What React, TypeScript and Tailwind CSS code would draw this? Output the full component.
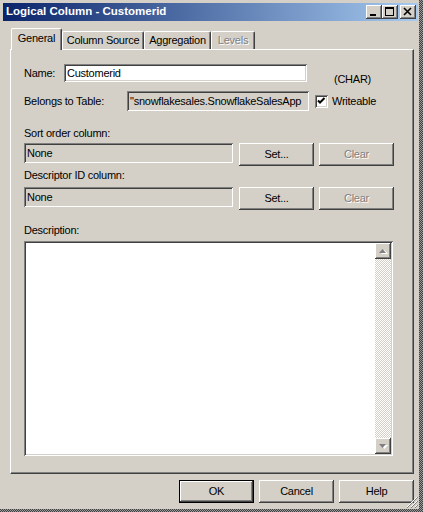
import type { ReactNode } from 'react';

const raised = 'shadow-[inset_-1px_-1px_#404040,inset_1px_1px_#ffffff,inset_-2px_-2px_#808080,inset_2px_2px_#d4d0c8]';
const sunken = 'shadow-[inset_1px_1px_#808080,inset_-1px_-1px_#ffffff,inset_2px_2px_#404040,inset_-2px_-2px_#d4d0c8]';
const etched = 'text-[#808080] [text-shadow:1px_1px_0_#ffffff]';

function Button({ label, disabled, isDefault }: { label: string; disabled?: boolean; isDefault?: boolean }) {
  return (
    <div
      className={`flex h-[23px] w-[75px] shrink-0 items-center justify-center bg-[#d4d0c8] ${
        isDefault
          ? 'shadow-[inset_0_0_0_1px_#000000,inset_-2px_-2px_#404040,inset_2px_2px_#ffffff,inset_-3px_-3px_#808080]'
          : raised
      } ${disabled ? etched : 'text-black'}`}
    >
      {label}
    </div>
  );
}

function Field({ value, width, white }: { value: string; width: string; white?: boolean }) {
  return (
    <div className={`flex h-[20px] shrink-0 items-center overflow-hidden whitespace-nowrap pl-[3px] ${width} ${white ? 'bg-white' : 'bg-[#d4d0c8]'} ${sunken}`}>
      {value}
    </div>
  );
}

function Tab({ children, selected, disabled, width }: { children: ReactNode; selected?: boolean; disabled?: boolean; width: string }) {
  return (
    <div
      className={`flex shrink-0 items-center justify-center whitespace-nowrap rounded-t-[2px] border-t border-l border-r border-t-white border-l-white border-r-[#404040] bg-[#d4d0c8] shadow-[inset_-1px_0_#808080] ${width} ${
        selected ? 'relative z-10 -mb-px h-[22px] pb-[2px]' : 'h-[18px]'
      } ${disabled ? etched : ''}`}
    >
      {children}
    </div>
  );
}

function TitleButton({ children, className = '' }: { children: ReactNode; className?: string }) {
  return <div className={`h-[14px] w-[16px] bg-[#d4d0c8] ${raised} ${className}`}>{children}</div>;
}

function ScrollButton({ up }: { up?: boolean }) {
  return (
    <div className={`h-[16px] w-[16px] shrink-0 bg-[#d4d0c8] ${raised}`}>
      <svg width="16" height="16" viewBox="0 0 16 16">
        {up ? (
          <>
            <path d="M5 10h7l-3.5-4z" fill="#ffffff" transform="translate(1 1)" />
            <path d="M4 10h7l-3.5-4z" fill="#808080" />
          </>
        ) : (
          <>
            <path d="M5 6h7l-3.5 4z" fill="#ffffff" transform="translate(1 1)" />
            <path d="M4 6h7l-3.5 4z" fill="#808080" />
          </>
        )}
      </svg>
    </div>
  );
}

export default function App() {
  return (
    <div className="h-[512px] w-[423px] overflow-hidden bg-[repeating-conic-gradient(#404040_0%_25%,#9a9a9a_0%_50%)] bg-[length:2px_2px] font-['Liberation_Sans',sans-serif] text-[11px] leading-none tracking-[-0.25px] text-black">
      <div className="relative flex h-[509px] w-[419px] flex-col bg-[#d4d0c8] pt-[3px] pl-[3px] pr-[1px]">
        {/* title bar */}
        <div className="flex h-[18px] shrink-0 items-center bg-[linear-gradient(to_right,#0a246a,#a6caf0)] pl-[3px] pr-[2px]">
          <span className="flex-1 text-[11.5px] font-bold tracking-normal text-white">Logical Column - Customerid</span>
          <TitleButton>
            <svg width="16" height="14" viewBox="0 0 16 14">
              <rect x="4" y="9" width="6" height="2" fill="#000" />
            </svg>
          </TitleButton>
          <TitleButton>
            <svg width="16" height="14" viewBox="0 0 16 14">
              <path d="M3 2h9v9H3z M4 4v6h7V4z" fill="#000" fillRule="evenodd" />
            </svg>
          </TitleButton>
          <TitleButton className="ml-[2px]">
            <svg width="16" height="14" viewBox="0 0 16 14">
              <path d="M4 3l7 7M11 3l-7 7" stroke="#000" strokeWidth="1.6" />
            </svg>
          </TitleButton>
        </div>

        {/* tabs */}
        <div className="ml-[8px] mt-[7px] flex h-[21px] items-end">
          <Tab selected width="w-[51px]">General</Tab>
          <Tab width="w-[82px]">Column Source</Tab>
          <Tab width="w-[67px]">Aggregation</Tab>
          <Tab disabled width="w-[44px]">Levels</Tab>
        </div>

        {/* tab panel */}
        <div className="ml-[7px] flex h-[425px] w-[404px] flex-col border border-t-white border-l-white border-r-[#404040] border-b-[#404040] pl-[13px] pt-[14px] shadow-[inset_-1px_-1px_#808080]">
          <div className="flex h-[18px] items-center">
            <span className="w-[40px] shrink-0">Name:</span>
            <div className={`flex h-[18px] w-[243px] shrink-0 items-center bg-white pl-[3px] ${sunken}`}>Customerid</div>
            <span className="ml-[27px] mt-[13px]">(CHAR)</span>
          </div>

          <div className="mt-[9px] flex h-[20px] items-center">
            <span className="w-[103px] shrink-0">Belongs to Table:</span>
            <Field width="w-[182px]" value={'"snowflakesales.SnowflakeSalesApp'} />
            <div className={`ml-[6px] h-[13px] w-[13px] shrink-0 bg-white ${sunken}`}>
              <svg width="13" height="13" viewBox="0 0 13 13">
                <path d="M3 5.5l2 2 4.5-4.5" stroke="#000" strokeWidth="2" fill="none" />
              </svg>
            </div>
            <span className="ml-[4px]">Writeable</span>
          </div>

          <div className="mt-[16px] h-[12px] leading-[12px]">Sort order column:</div>
          <div className="mt-[4px] flex items-start">
            <Field width="w-[209px]" value="None" />
            <div className="ml-[6px]">
              <Button label="Set..." />
            </div>
            <div className="ml-[5px]">
              <Button label="Clear" disabled />
            </div>
          </div>

          <div className="mt-[3px] h-[12px] leading-[12px]">Descriptor ID column:</div>
          <div className="mt-[6px] flex items-start">
            <Field width="w-[209px]" value="None" />
            <div className="ml-[6px]">
              <Button label="Set..." />
            </div>
            <div className="ml-[5px]">
              <Button label="Clear" disabled />
            </div>
          </div>

          <div className="mt-[14px] h-[12px] leading-[12px]">Description:</div>
          <div className={`mt-[5px] flex h-[215px] w-[369px] bg-white p-[2px] ${sunken}`}>
            <div className="flex-1" />
            <div className="flex w-[16px] flex-col">
              <ScrollButton up />
              <div className="flex-1 bg-[repeating-conic-gradient(#d4d0c8_0%_25%,#ffffff_0%_50%)] bg-[length:2px_2px]" />
              <ScrollButton />
            </div>
          </div>
        </div>

        {/* dialog buttons */}
        <div className="mt-[6px] flex justify-end gap-[5px] pr-[4px]">
          <Button label="OK" isDefault />
          <Button label="Cancel" />
          <Button label="Help" />
        </div>

        {/* size grip */}
        <svg className="absolute bottom-[1px] right-[1px]" width="12" height="12" viewBox="0 0 12 12">
          <path d="M11 1L1 11M11 5L5 11M11 9L9 11" stroke="#ffffff" strokeWidth="1" />
          <path d="M12 1L1 12M12 5L5 12M12 9L9 12" stroke="#808080" strokeWidth="1" />
        </svg>
      </div>
    </div>
  );
}
